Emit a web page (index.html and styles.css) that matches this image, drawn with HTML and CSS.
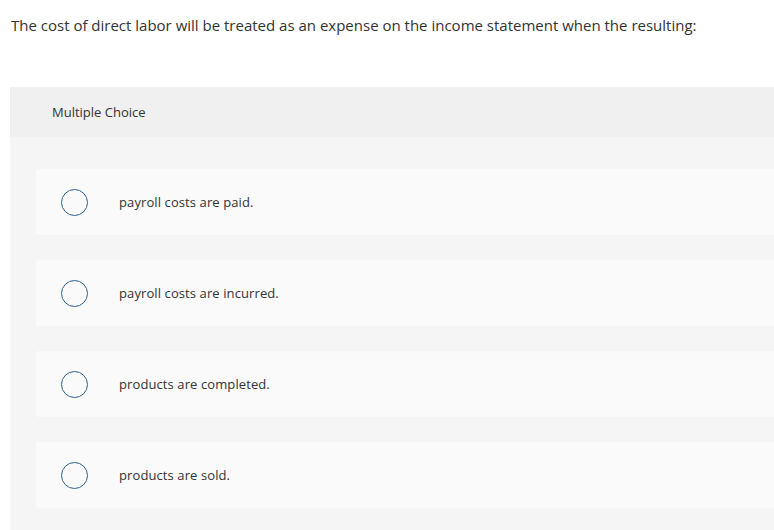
FILE: index.html
```html
<!DOCTYPE html>
<html>
<head>
<meta charset="utf-8">
<link rel="stylesheet" href="styles.css">
</head>
<body>
<p class="question">The cost of direct labor will be treated as an expense on the income statement when the resulting:</p>
<div class="panel">
  <div class="panel-head">Multiple Choice</div>
  <div class="panel-body">
    <div class="option"><span class="radio"></span><span class="label">payroll costs are paid.</span></div>
    <div class="option"><span class="radio"></span><span class="label">payroll costs are incurred.</span></div>
    <div class="option"><span class="radio"></span><span class="label">products are completed.</span></div>
    <div class="option"><span class="radio"></span><span class="label">products are sold.</span></div>
  </div>
</div>
</body>
</html>
```
FILE: styles.css
```css
html, body { margin: 0; padding: 0; background: #fff; }
body { font-family: "Open Sans", "Liberation Sans", sans-serif; color: #333; overflow: hidden; }
.question {
  margin: 0;
  padding: 15px 0 0 11px;
  font-size: 15px;
  line-height: 20px;
  height: 72px;
  color: #333;
}
.panel { margin-left: 10px; background: #f5f5f5; }
.panel-head {
  height: 50px;
  background: #f0f0f0;
  padding-left: 42px;
  display: flex;
  align-items: center;
  font-size: 13px;
  color: #333;
}
.panel-body {
  padding: 32px 0 30px 26px;
  display: flex;
  flex-direction: column;
  gap: 25px;
}
.option {
  height: 66px;
  background: #fafafa;
  border-radius: 3px 0 0 3px;
  display: flex;
  align-items: center;
}
.radio {
  width: 25px;
  height: 25px;
  border: 1.5px solid #2f5f8e;
  border-radius: 50%;
  margin-left: 25px;
  flex-shrink: 0;
}
.label {
  margin-left: 31px;
  font-size: 13px;
  letter-spacing: 0.1px;
  color: #333;
}
```
